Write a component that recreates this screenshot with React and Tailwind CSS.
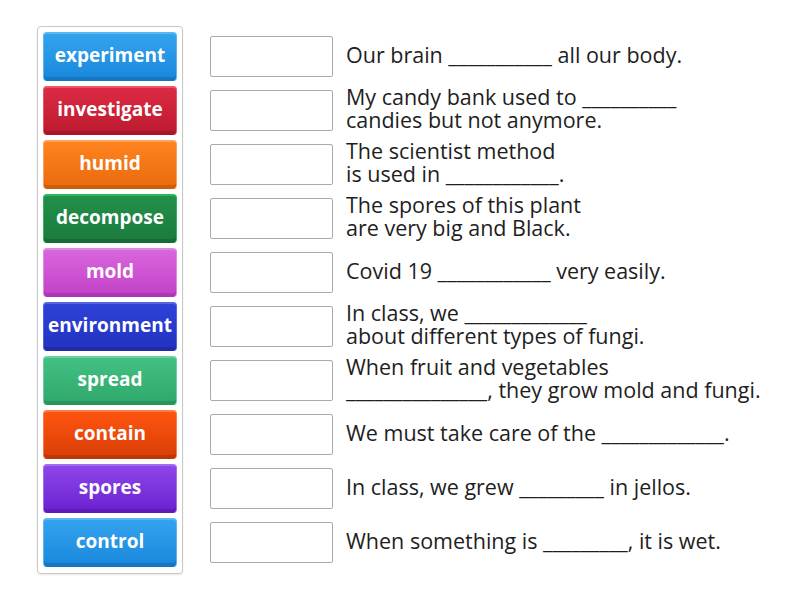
const tiles = [
  { word: 'experiment', cls: 'bg-gradient-to-b from-[#34a3ee] to-[#1787dc] border-[#5bb7f3]' },
  { word: 'investigate', cls: 'bg-gradient-to-b from-[#dc2a42] to-[#bb1a2f] border-[#e6566a]' },
  { word: 'humid', cls: 'bg-gradient-to-b from-[#ff831f] to-[#ea6a0c] border-[#ffa05a]' },
  { word: 'decompose', cls: 'bg-gradient-to-b from-[#22904a] to-[#1a7a3c] border-[#2fb65d]' },
  { word: 'mold', cls: 'bg-gradient-to-b from-[#d866dc] to-[#c23fc9] border-[#e089e3]' },
  { word: 'environment', cls: 'bg-gradient-to-b from-[#2e42d8] to-[#2232c0] border-[#5464e2]' },
  { word: 'spread', cls: 'bg-gradient-to-b from-[#43c083] to-[#2ea86a] border-[#6bd09f]' },
  { word: 'contain', cls: 'bg-gradient-to-b from-[#ff5410] to-[#d83e06] border-[#ff7c48]' },
  { word: 'spores', cls: 'bg-gradient-to-b from-[#8e44e8] to-[#6a1ed0] border-[#a46cee]' },
  { word: 'control', cls: 'bg-gradient-to-b from-[#34a3ee] to-[#1787dc] border-[#5bb7f3]' },
];

const sentences = [
  ['Our brain ___________ all our body.'],
  ['My candy bank used to __________', 'candies but not anymore.'],
  ['The scientist method', 'is used in ____________.'],
  ['The spores of this plant', 'are very big and Black.'],
  ['Covid 19 ____________ very easily.'],
  ['In class, we _____________', 'about different types of fungi.'],
  ['When fruit and vegetables', '_______________, they grow mold and fungi.'],
  ['We must take care of the _____________.'],
  ['In class, we grew _________ in jellos.'],
  ['When something is _________, it is wet.'],
];

function Tile({ word, cls }) {
  return (
    <div
      className={`h-[49px] w-[134px] rounded-[4px] border-t-2 border-l border-r flex items-center justify-center pb-[4px] shadow-[inset_0_-4px_0_rgba(0,0,0,0.12)] ${cls}`}
    >
      <span className="text-white font-bold text-[19px] leading-none">{word}</span>
    </div>
  );
}

export default function App() {
  return (
    <div className="w-[800px] h-[600px] bg-white flex items-start pl-[37px] pt-[26px] font-['Open_Sans',sans-serif]">
      <div className="border border-[#c8c8c8] rounded-[4px] px-[5px] pt-[5px] pb-[6px] flex flex-col gap-[5px] shadow-[0_1px_2px_rgba(0,0,0,0.1)]">
        {tiles.map(t => <Tile key={t.word} {...t} />)}
      </div>

      <div className="ml-[27px] pt-[6px] flex flex-col gap-[5px]">
        {sentences.map((lines, i) => (
          <div key={i} className="h-[49px] flex items-center">
            <div className="w-[123px] h-[41px] border border-[#aaaaaa] rounded-[2px] bg-white shrink-0" />
            <div className={`ml-[13px] ${lines.length > 1 ? 'pb-[6px]' : 'pb-[4px]'} text-[21.5px] leading-[23px] text-[#1e1e1e] whitespace-nowrap`}>
              {lines.map((l, j) => <div key={j}>{l}</div>)}
            </div>
          </div>
        ))}
      </div>
    </div>
  );
}
